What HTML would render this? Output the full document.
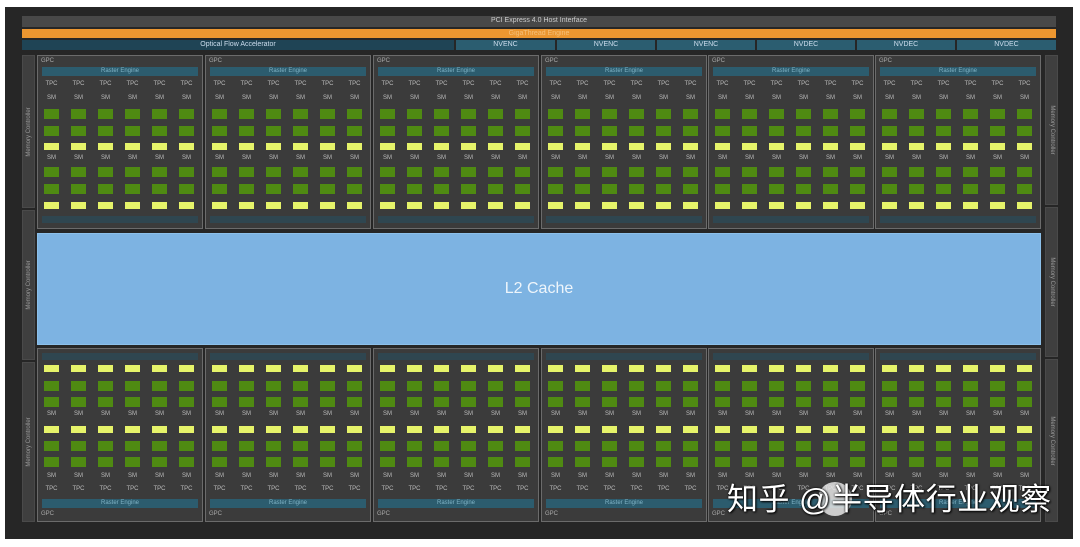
<!DOCTYPE html><html><head><meta charset="utf-8"><style>
*{margin:0;padding:0;box-sizing:border-box}
body{width:1080px;height:547px;background:#fff;position:relative;overflow:hidden;font-family:"Liberation Sans",sans-serif}
.frame{position:absolute;left:5px;top:7px;width:1068px;height:532px;background:#262626}
.abs{position:absolute}
.bar{position:absolute;font-size:7px;text-align:center;line-height:10px}
.gpc{position:absolute;width:166px;height:174px;border:1px solid #6b6b6b;background:#3b3b3b}
.gpc .lab{position:absolute;left:3px;font-size:6px;color:#aaa}
.gpc .re{position:absolute;left:4px;width:156px;height:9px;background:#2c5c6e;color:#7fb3c6;font-size:6px;text-align:center;line-height:9px}
.gpc .bb{position:absolute;left:4px;width:156px;height:7px;background:#2f4650}
.c{position:absolute;top:0;width:15px;height:100%}
.c i,.c b{position:absolute;left:-3px;width:21px;text-align:center;font-style:normal;font-weight:normal;font-size:6px;color:#bbb;line-height:7px}
.c u{position:absolute;left:0;width:15px;height:10px;background:#4f8a12}
.c s{position:absolute;left:0;width:15px;height:7px;background:#e6f36a}
.top .t{top:25px}.top .s1{top:39px}.top .g1{top:53px}.top .g2{top:70px}.top .y1{top:87px}.top .s2{top:99px}.top .g3{top:111px}.top .g4{top:128px}.top .y2{top:146px}
.bot .y1{top:16px}.bot .g1{top:32px}.bot .g2{top:48px}.bot .s1{top:62px}.bot .y2{top:77px}.bot .g3{top:92px}.bot .g4{top:108px}.bot .s2{top:124px}.bot .t{top:137px}
.c:nth-child(4){left:6px}.c:nth-child(5){left:33px}.c:nth-child(6){left:60px}.c:nth-child(7){left:87px}.c:nth-child(8){left:114px}.c:nth-child(9){left:141px}
.mc{position:absolute;width:13px;background:#3f3f3f;border:1px solid #4a4a4a}
.mc span{position:absolute;left:50%;top:50%;transform:translate(-50%,-50%) rotate(-90deg);font-size:6px;color:#999;white-space:nowrap}
.mc.r span{transform:translate(-50%,-50%) rotate(90deg)}
</style></head><body>
<div class="frame"></div>
<div class="bar" style="left:22px;top:16px;width:1034px;height:11px;background:#484848;color:#ccc">PCI Express 4.0 Host Interface</div>
<div class="bar" style="left:22px;top:29px;width:1034px;height:9px;line-height:9px;background:#ec9630;color:#f6c07a">GigaThread Engine</div>
<div class="bar" style="left:22px;top:40px;width:432px;height:10px;background:#1f4455;color:#cde">Optical Flow Accelerator</div>
<div class="bar" style="left:456px;top:40px;width:99px;height:10px;background:#2b5d70;color:#cde">NVENC</div>
<div class="bar" style="left:557px;top:40px;width:98px;height:10px;background:#2b5d70;color:#cde">NVENC</div>
<div class="bar" style="left:657px;top:40px;width:98px;height:10px;background:#2b5d70;color:#cde">NVENC</div>
<div class="bar" style="left:757px;top:40px;width:98px;height:10px;background:#2b5d70;color:#cde">NVDEC</div>
<div class="bar" style="left:857px;top:40px;width:98px;height:10px;background:#2b5d70;color:#cde">NVDEC</div>
<div class="bar" style="left:957px;top:40px;width:99px;height:10px;background:#2b5d70;color:#cde">NVDEC</div>
<div class="mc" style="left:22px;top:55px;height:153px"><span>Memory Controller</span></div>
<div class="mc" style="left:22px;top:210px;height:150px"><span>Memory Controller</span></div>
<div class="mc" style="left:22px;top:362px;height:160px"><span>Memory Controller</span></div>
<div class="mc r" style="left:1045px;top:55px;height:150px"><span>Memory Controller</span></div>
<div class="mc r" style="left:1045px;top:207px;height:150px"><span>Memory Controller</span></div>
<div class="mc r" style="left:1045px;top:359px;height:163px"><span>Memory Controller</span></div>
<div class="abs" style="left:37px;top:233px;width:1004px;height:112px;background:#7db3e2;border:1px solid #8cc0ea;color:#eef5fb;font-size:16px;text-align:center;line-height:110px">L2 Cache</div>

<!-- TOP ROW -->
<div class="gpc top" style="left:37px;top:55px"><div class="lab" style="top:2px">GPC</div><div class="re" style="top:11px">Raster Engine</div><div class="bb" style="top:160px"></div>
<div class="c"><i class="t">TPC</i><b class="s1">SM</b><u class="g1"></u><u class="g2"></u><s class="y1"></s><b class="s2">SM</b><u class="g3"></u><u class="g4"></u><s class="y2"></s></div><div class="c"><i class="t">TPC</i><b class="s1">SM</b><u class="g1"></u><u class="g2"></u><s class="y1"></s><b class="s2">SM</b><u class="g3"></u><u class="g4"></u><s class="y2"></s></div><div class="c"><i class="t">TPC</i><b class="s1">SM</b><u class="g1"></u><u class="g2"></u><s class="y1"></s><b class="s2">SM</b><u class="g3"></u><u class="g4"></u><s class="y2"></s></div><div class="c"><i class="t">TPC</i><b class="s1">SM</b><u class="g1"></u><u class="g2"></u><s class="y1"></s><b class="s2">SM</b><u class="g3"></u><u class="g4"></u><s class="y2"></s></div><div class="c"><i class="t">TPC</i><b class="s1">SM</b><u class="g1"></u><u class="g2"></u><s class="y1"></s><b class="s2">SM</b><u class="g3"></u><u class="g4"></u><s class="y2"></s></div><div class="c"><i class="t">TPC</i><b class="s1">SM</b><u class="g1"></u><u class="g2"></u><s class="y1"></s><b class="s2">SM</b><u class="g3"></u><u class="g4"></u><s class="y2"></s></div></div>
<div class="gpc top" style="left:205px;top:55px"><div class="lab" style="top:2px">GPC</div><div class="re" style="top:11px">Raster Engine</div><div class="bb" style="top:160px"></div>
<div class="c"><i class="t">TPC</i><b class="s1">SM</b><u class="g1"></u><u class="g2"></u><s class="y1"></s><b class="s2">SM</b><u class="g3"></u><u class="g4"></u><s class="y2"></s></div><div class="c"><i class="t">TPC</i><b class="s1">SM</b><u class="g1"></u><u class="g2"></u><s class="y1"></s><b class="s2">SM</b><u class="g3"></u><u class="g4"></u><s class="y2"></s></div><div class="c"><i class="t">TPC</i><b class="s1">SM</b><u class="g1"></u><u class="g2"></u><s class="y1"></s><b class="s2">SM</b><u class="g3"></u><u class="g4"></u><s class="y2"></s></div><div class="c"><i class="t">TPC</i><b class="s1">SM</b><u class="g1"></u><u class="g2"></u><s class="y1"></s><b class="s2">SM</b><u class="g3"></u><u class="g4"></u><s class="y2"></s></div><div class="c"><i class="t">TPC</i><b class="s1">SM</b><u class="g1"></u><u class="g2"></u><s class="y1"></s><b class="s2">SM</b><u class="g3"></u><u class="g4"></u><s class="y2"></s></div><div class="c"><i class="t">TPC</i><b class="s1">SM</b><u class="g1"></u><u class="g2"></u><s class="y1"></s><b class="s2">SM</b><u class="g3"></u><u class="g4"></u><s class="y2"></s></div></div>
<div class="gpc top" style="left:373px;top:55px"><div class="lab" style="top:2px">GPC</div><div class="re" style="top:11px">Raster Engine</div><div class="bb" style="top:160px"></div>
<div class="c"><i class="t">TPC</i><b class="s1">SM</b><u class="g1"></u><u class="g2"></u><s class="y1"></s><b class="s2">SM</b><u class="g3"></u><u class="g4"></u><s class="y2"></s></div><div class="c"><i class="t">TPC</i><b class="s1">SM</b><u class="g1"></u><u class="g2"></u><s class="y1"></s><b class="s2">SM</b><u class="g3"></u><u class="g4"></u><s class="y2"></s></div><div class="c"><i class="t">TPC</i><b class="s1">SM</b><u class="g1"></u><u class="g2"></u><s class="y1"></s><b class="s2">SM</b><u class="g3"></u><u class="g4"></u><s class="y2"></s></div><div class="c"><i class="t">TPC</i><b class="s1">SM</b><u class="g1"></u><u class="g2"></u><s class="y1"></s><b class="s2">SM</b><u class="g3"></u><u class="g4"></u><s class="y2"></s></div><div class="c"><i class="t">TPC</i><b class="s1">SM</b><u class="g1"></u><u class="g2"></u><s class="y1"></s><b class="s2">SM</b><u class="g3"></u><u class="g4"></u><s class="y2"></s></div><div class="c"><i class="t">TPC</i><b class="s1">SM</b><u class="g1"></u><u class="g2"></u><s class="y1"></s><b class="s2">SM</b><u class="g3"></u><u class="g4"></u><s class="y2"></s></div></div>
<div class="gpc top" style="left:541px;top:55px"><div class="lab" style="top:2px">GPC</div><div class="re" style="top:11px">Raster Engine</div><div class="bb" style="top:160px"></div>
<div class="c"><i class="t">TPC</i><b class="s1">SM</b><u class="g1"></u><u class="g2"></u><s class="y1"></s><b class="s2">SM</b><u class="g3"></u><u class="g4"></u><s class="y2"></s></div><div class="c"><i class="t">TPC</i><b class="s1">SM</b><u class="g1"></u><u class="g2"></u><s class="y1"></s><b class="s2">SM</b><u class="g3"></u><u class="g4"></u><s class="y2"></s></div><div class="c"><i class="t">TPC</i><b class="s1">SM</b><u class="g1"></u><u class="g2"></u><s class="y1"></s><b class="s2">SM</b><u class="g3"></u><u class="g4"></u><s class="y2"></s></div><div class="c"><i class="t">TPC</i><b class="s1">SM</b><u class="g1"></u><u class="g2"></u><s class="y1"></s><b class="s2">SM</b><u class="g3"></u><u class="g4"></u><s class="y2"></s></div><div class="c"><i class="t">TPC</i><b class="s1">SM</b><u class="g1"></u><u class="g2"></u><s class="y1"></s><b class="s2">SM</b><u class="g3"></u><u class="g4"></u><s class="y2"></s></div><div class="c"><i class="t">TPC</i><b class="s1">SM</b><u class="g1"></u><u class="g2"></u><s class="y1"></s><b class="s2">SM</b><u class="g3"></u><u class="g4"></u><s class="y2"></s></div></div>
<div class="gpc top" style="left:708px;top:55px"><div class="lab" style="top:2px">GPC</div><div class="re" style="top:11px">Raster Engine</div><div class="bb" style="top:160px"></div>
<div class="c"><i class="t">TPC</i><b class="s1">SM</b><u class="g1"></u><u class="g2"></u><s class="y1"></s><b class="s2">SM</b><u class="g3"></u><u class="g4"></u><s class="y2"></s></div><div class="c"><i class="t">TPC</i><b class="s1">SM</b><u class="g1"></u><u class="g2"></u><s class="y1"></s><b class="s2">SM</b><u class="g3"></u><u class="g4"></u><s class="y2"></s></div><div class="c"><i class="t">TPC</i><b class="s1">SM</b><u class="g1"></u><u class="g2"></u><s class="y1"></s><b class="s2">SM</b><u class="g3"></u><u class="g4"></u><s class="y2"></s></div><div class="c"><i class="t">TPC</i><b class="s1">SM</b><u class="g1"></u><u class="g2"></u><s class="y1"></s><b class="s2">SM</b><u class="g3"></u><u class="g4"></u><s class="y2"></s></div><div class="c"><i class="t">TPC</i><b class="s1">SM</b><u class="g1"></u><u class="g2"></u><s class="y1"></s><b class="s2">SM</b><u class="g3"></u><u class="g4"></u><s class="y2"></s></div><div class="c"><i class="t">TPC</i><b class="s1">SM</b><u class="g1"></u><u class="g2"></u><s class="y1"></s><b class="s2">SM</b><u class="g3"></u><u class="g4"></u><s class="y2"></s></div></div>
<div class="gpc top" style="left:875px;top:55px"><div class="lab" style="top:2px">GPC</div><div class="re" style="top:11px">Raster Engine</div><div class="bb" style="top:160px"></div>
<div class="c"><i class="t">TPC</i><b class="s1">SM</b><u class="g1"></u><u class="g2"></u><s class="y1"></s><b class="s2">SM</b><u class="g3"></u><u class="g4"></u><s class="y2"></s></div><div class="c"><i class="t">TPC</i><b class="s1">SM</b><u class="g1"></u><u class="g2"></u><s class="y1"></s><b class="s2">SM</b><u class="g3"></u><u class="g4"></u><s class="y2"></s></div><div class="c"><i class="t">TPC</i><b class="s1">SM</b><u class="g1"></u><u class="g2"></u><s class="y1"></s><b class="s2">SM</b><u class="g3"></u><u class="g4"></u><s class="y2"></s></div><div class="c"><i class="t">TPC</i><b class="s1">SM</b><u class="g1"></u><u class="g2"></u><s class="y1"></s><b class="s2">SM</b><u class="g3"></u><u class="g4"></u><s class="y2"></s></div><div class="c"><i class="t">TPC</i><b class="s1">SM</b><u class="g1"></u><u class="g2"></u><s class="y1"></s><b class="s2">SM</b><u class="g3"></u><u class="g4"></u><s class="y2"></s></div><div class="c"><i class="t">TPC</i><b class="s1">SM</b><u class="g1"></u><u class="g2"></u><s class="y1"></s><b class="s2">SM</b><u class="g3"></u><u class="g4"></u><s class="y2"></s></div></div>

<!-- BOTTOM ROW -->
<div class="gpc bot" style="left:37px;top:348px"><div class="bb" style="top:4px"></div><div class="re" style="top:150px">Raster Engine</div><div class="lab" style="top:162px">GPC</div>
<div class="c"><s class="y1"></s><u class="g1"></u><u class="g2"></u><b class="s1">SM</b><s class="y2"></s><u class="g3"></u><u class="g4"></u><b class="s2">SM</b><i class="t">TPC</i></div><div class="c"><s class="y1"></s><u class="g1"></u><u class="g2"></u><b class="s1">SM</b><s class="y2"></s><u class="g3"></u><u class="g4"></u><b class="s2">SM</b><i class="t">TPC</i></div><div class="c"><s class="y1"></s><u class="g1"></u><u class="g2"></u><b class="s1">SM</b><s class="y2"></s><u class="g3"></u><u class="g4"></u><b class="s2">SM</b><i class="t">TPC</i></div><div class="c"><s class="y1"></s><u class="g1"></u><u class="g2"></u><b class="s1">SM</b><s class="y2"></s><u class="g3"></u><u class="g4"></u><b class="s2">SM</b><i class="t">TPC</i></div><div class="c"><s class="y1"></s><u class="g1"></u><u class="g2"></u><b class="s1">SM</b><s class="y2"></s><u class="g3"></u><u class="g4"></u><b class="s2">SM</b><i class="t">TPC</i></div><div class="c"><s class="y1"></s><u class="g1"></u><u class="g2"></u><b class="s1">SM</b><s class="y2"></s><u class="g3"></u><u class="g4"></u><b class="s2">SM</b><i class="t">TPC</i></div></div>
<div class="gpc bot" style="left:205px;top:348px"><div class="bb" style="top:4px"></div><div class="re" style="top:150px">Raster Engine</div><div class="lab" style="top:162px">GPC</div>
<div class="c"><s class="y1"></s><u class="g1"></u><u class="g2"></u><b class="s1">SM</b><s class="y2"></s><u class="g3"></u><u class="g4"></u><b class="s2">SM</b><i class="t">TPC</i></div><div class="c"><s class="y1"></s><u class="g1"></u><u class="g2"></u><b class="s1">SM</b><s class="y2"></s><u class="g3"></u><u class="g4"></u><b class="s2">SM</b><i class="t">TPC</i></div><div class="c"><s class="y1"></s><u class="g1"></u><u class="g2"></u><b class="s1">SM</b><s class="y2"></s><u class="g3"></u><u class="g4"></u><b class="s2">SM</b><i class="t">TPC</i></div><div class="c"><s class="y1"></s><u class="g1"></u><u class="g2"></u><b class="s1">SM</b><s class="y2"></s><u class="g3"></u><u class="g4"></u><b class="s2">SM</b><i class="t">TPC</i></div><div class="c"><s class="y1"></s><u class="g1"></u><u class="g2"></u><b class="s1">SM</b><s class="y2"></s><u class="g3"></u><u class="g4"></u><b class="s2">SM</b><i class="t">TPC</i></div><div class="c"><s class="y1"></s><u class="g1"></u><u class="g2"></u><b class="s1">SM</b><s class="y2"></s><u class="g3"></u><u class="g4"></u><b class="s2">SM</b><i class="t">TPC</i></div></div>
<div class="gpc bot" style="left:373px;top:348px"><div class="bb" style="top:4px"></div><div class="re" style="top:150px">Raster Engine</div><div class="lab" style="top:162px">GPC</div>
<div class="c"><s class="y1"></s><u class="g1"></u><u class="g2"></u><b class="s1">SM</b><s class="y2"></s><u class="g3"></u><u class="g4"></u><b class="s2">SM</b><i class="t">TPC</i></div><div class="c"><s class="y1"></s><u class="g1"></u><u class="g2"></u><b class="s1">SM</b><s class="y2"></s><u class="g3"></u><u class="g4"></u><b class="s2">SM</b><i class="t">TPC</i></div><div class="c"><s class="y1"></s><u class="g1"></u><u class="g2"></u><b class="s1">SM</b><s class="y2"></s><u class="g3"></u><u class="g4"></u><b class="s2">SM</b><i class="t">TPC</i></div><div class="c"><s class="y1"></s><u class="g1"></u><u class="g2"></u><b class="s1">SM</b><s class="y2"></s><u class="g3"></u><u class="g4"></u><b class="s2">SM</b><i class="t">TPC</i></div><div class="c"><s class="y1"></s><u class="g1"></u><u class="g2"></u><b class="s1">SM</b><s class="y2"></s><u class="g3"></u><u class="g4"></u><b class="s2">SM</b><i class="t">TPC</i></div><div class="c"><s class="y1"></s><u class="g1"></u><u class="g2"></u><b class="s1">SM</b><s class="y2"></s><u class="g3"></u><u class="g4"></u><b class="s2">SM</b><i class="t">TPC</i></div></div>
<div class="gpc bot" style="left:541px;top:348px"><div class="bb" style="top:4px"></div><div class="re" style="top:150px">Raster Engine</div><div class="lab" style="top:162px">GPC</div>
<div class="c"><s class="y1"></s><u class="g1"></u><u class="g2"></u><b class="s1">SM</b><s class="y2"></s><u class="g3"></u><u class="g4"></u><b class="s2">SM</b><i class="t">TPC</i></div><div class="c"><s class="y1"></s><u class="g1"></u><u class="g2"></u><b class="s1">SM</b><s class="y2"></s><u class="g3"></u><u class="g4"></u><b class="s2">SM</b><i class="t">TPC</i></div><div class="c"><s class="y1"></s><u class="g1"></u><u class="g2"></u><b class="s1">SM</b><s class="y2"></s><u class="g3"></u><u class="g4"></u><b class="s2">SM</b><i class="t">TPC</i></div><div class="c"><s class="y1"></s><u class="g1"></u><u class="g2"></u><b class="s1">SM</b><s class="y2"></s><u class="g3"></u><u class="g4"></u><b class="s2">SM</b><i class="t">TPC</i></div><div class="c"><s class="y1"></s><u class="g1"></u><u class="g2"></u><b class="s1">SM</b><s class="y2"></s><u class="g3"></u><u class="g4"></u><b class="s2">SM</b><i class="t">TPC</i></div><div class="c"><s class="y1"></s><u class="g1"></u><u class="g2"></u><b class="s1">SM</b><s class="y2"></s><u class="g3"></u><u class="g4"></u><b class="s2">SM</b><i class="t">TPC</i></div></div>
<div class="gpc bot" style="left:708px;top:348px"><div class="bb" style="top:4px"></div><div class="re" style="top:150px">Raster Engine</div><div class="lab" style="top:162px">GPC</div>
<div class="c"><s class="y1"></s><u class="g1"></u><u class="g2"></u><b class="s1">SM</b><s class="y2"></s><u class="g3"></u><u class="g4"></u><b class="s2">SM</b><i class="t">TPC</i></div><div class="c"><s class="y1"></s><u class="g1"></u><u class="g2"></u><b class="s1">SM</b><s class="y2"></s><u class="g3"></u><u class="g4"></u><b class="s2">SM</b><i class="t">TPC</i></div><div class="c"><s class="y1"></s><u class="g1"></u><u class="g2"></u><b class="s1">SM</b><s class="y2"></s><u class="g3"></u><u class="g4"></u><b class="s2">SM</b><i class="t">TPC</i></div><div class="c"><s class="y1"></s><u class="g1"></u><u class="g2"></u><b class="s1">SM</b><s class="y2"></s><u class="g3"></u><u class="g4"></u><b class="s2">SM</b><i class="t">TPC</i></div><div class="c"><s class="y1"></s><u class="g1"></u><u class="g2"></u><b class="s1">SM</b><s class="y2"></s><u class="g3"></u><u class="g4"></u><b class="s2">SM</b><i class="t">TPC</i></div><div class="c"><s class="y1"></s><u class="g1"></u><u class="g2"></u><b class="s1">SM</b><s class="y2"></s><u class="g3"></u><u class="g4"></u><b class="s2">SM</b><i class="t">TPC</i></div></div>
<div class="gpc bot" style="left:875px;top:348px"><div class="bb" style="top:4px"></div><div class="re" style="top:150px">Raster Engine</div><div class="lab" style="top:162px">GPC</div>
<div class="c"><s class="y1"></s><u class="g1"></u><u class="g2"></u><b class="s1">SM</b><s class="y2"></s><u class="g3"></u><u class="g4"></u><b class="s2">SM</b><i class="t">TPC</i></div><div class="c"><s class="y1"></s><u class="g1"></u><u class="g2"></u><b class="s1">SM</b><s class="y2"></s><u class="g3"></u><u class="g4"></u><b class="s2">SM</b><i class="t">TPC</i></div><div class="c"><s class="y1"></s><u class="g1"></u><u class="g2"></u><b class="s1">SM</b><s class="y2"></s><u class="g3"></u><u class="g4"></u><b class="s2">SM</b><i class="t">TPC</i></div><div class="c"><s class="y1"></s><u class="g1"></u><u class="g2"></u><b class="s1">SM</b><s class="y2"></s><u class="g3"></u><u class="g4"></u><b class="s2">SM</b><i class="t">TPC</i></div><div class="c"><s class="y1"></s><u class="g1"></u><u class="g2"></u><b class="s1">SM</b><s class="y2"></s><u class="g3"></u><u class="g4"></u><b class="s2">SM</b><i class="t">TPC</i></div><div class="c"><s class="y1"></s><u class="g1"></u><u class="g2"></u><b class="s1">SM</b><s class="y2"></s><u class="g3"></u><u class="g4"></u><b class="s2">SM</b><i class="t">TPC</i></div></div>

<div class="abs" style="left:818px;top:482px;width:34px;height:34px;border-radius:50%;background:rgba(230,230,230,0.85)"></div>
<div class="abs" style="left:727px;top:478px;font-family:'Liberation Sans','Noto Sans CJK SC',sans-serif;font-size:31px;letter-spacing:0.5px;line-height:44px;color:#fff;text-shadow:0 0 2px #000,1px 1px 2px #000;white-space:nowrap">知乎 @半导体行业观察</div>
</body></html>
